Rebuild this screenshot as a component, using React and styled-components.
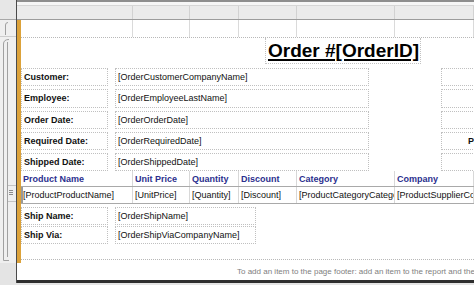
import styled, { createGlobalStyle } from 'styled-components'

const Global = createGlobalStyle`
  html, body { margin: 0; padding: 0; background: #e4e4e4; }
  body { font-family: "Liberation Sans", Arial, sans-serif; }
`

const Frame = styled.div`
  display: flex;
  width: 474px;
  height: 285px;
  overflow: hidden;
  background: #e4e4e4;
`

const Gutter = styled.div`
  width: 16px;
  flex-shrink: 0;
  background: #efefef;
`

const Page = styled.div`
  flex: 1;
  min-width: 0;
  display: flex;
  flex-direction: column;
  border-left: 1px solid #4a4a4a;
  height: 283px;
  overflow: hidden;
`

const TopRule = styled.div`
  height: 2px;
  background: #8e8e8e;
  flex-shrink: 0;
`

const TopGap = styled.div`
  height: 3px;
  background: #f6f6f6;
  flex-shrink: 0;
`

const ColumnHeader = styled.div`
  display: grid;
  grid-template-columns: 116px 57px 49px 58px 98px 1fr;
  height: 13px;
  background: #ebebeb;
  border-top: 1px solid #d6d6d6;
  border-bottom: 1px solid #9c9c9c;
  flex-shrink: 0;
`

const HeadCell = styled.div`
  border-right: 1px solid #d2d2d2;
`

const Body = styled.div`
  flex: 1;
  display: flex;
  flex-direction: column;
  background: #fff;
  border-bottom: 3px solid #2e2e2e;
`

const Detail = styled.div`
  display: flex;
  height: 243px;
  flex-shrink: 0;
`

const Strip = styled.div`
  width: 4px;
  flex-shrink: 0;
  background: #dca23a;
`

const Content = styled.div`
  flex: 1;
  min-width: 0;
  display: flex;
  flex-direction: column;
`

const BandRow = styled.div`
  display: grid;
  grid-template-columns: 112px 57px 49px 58px 98px 1fr;
  height: 17px;
  border-bottom: 1px dotted #b8b8b8;
  flex-shrink: 0;
`

const BandCell = styled.div`
  border-right: 1px solid #dadada;
`

const TitleRow = styled.div`
  display: flex;
  padding-left: 244px;
  height: 26px;
  flex-shrink: 0;
`

const TitleBox = styled.div`
  width: 156px;
  box-sizing: border-box;
  border: 1px dotted #c2c2c2;
  border-top: none;
  padding: 0 0 0 2px;
  font-weight: bold;
  font-size: 19px;
  line-height: 26px;
  color: #000;
  text-decoration: underline;
  text-decoration-thickness: 2px;
  text-underline-offset: 2px;
  white-space: nowrap;
`

const Fields = styled.div`
  display: flex;
  flex-direction: column;
  gap: 3px;
  margin-top: 4px;
  flex-shrink: 0;
`

const FieldRow = styled.div`
  display: flex;
  height: ${p => p.$h || 18.3}px;
  flex-shrink: 0;
`

const Box = styled.div`
  box-sizing: border-box;
  width: ${p => p.$w}px;
  margin-left: ${p => p.$ml || 0}px;
  flex-shrink: 0;
  border: 1px dotted #c0c0c0;
  padding-left: ${p => p.$pl || 2}px;
  display: flex;
  align-items: center;
  font-size: 9px;
  font-weight: ${p => (p.$bold ? 'bold' : 'normal')};
  color: #111;
  white-space: nowrap;
  overflow: hidden;
`

const Table = styled.div`
  display: flex;
  flex-direction: column;
  flex-shrink: 0;
`

const TableRow = styled.div`
  display: grid;
  grid-template-columns: 112px 57px 49px 58px 98px 1fr;
  height: ${p => p.$h}px;
  border-bottom: 1px solid #a9a9a9;
`

const TCell = styled.div`
  display: flex;
  align-items: center;
  padding-left: ${p => p.$pl ?? 2}px;
  border-right: 1px solid #d8d8d8;
  border-left: ${p => (p.$marker ? '2px solid #9a9a9a' : 'none')};
  font-size: 9px;
  font-weight: ${p => (p.$head ? 'bold' : 'normal')};
  color: ${p => (p.$head ? '#2b2f8e' : '#111')};
  white-space: nowrap;
  overflow: hidden;
`

const Ship = styled.div`
  display: flex;
  flex-direction: column;
  gap: 1.5px;
  margin-top: 3px;
  flex-shrink: 0;
`

const SectionEnd = styled.div`
  margin-top: auto;
  margin-bottom: 3px;
  border-bottom: 1px dotted #b8b8b8;
`

const Footer = styled.div`
  flex: 1;
  display: flex;
  align-items: center;
  padding-left: 220px;
  font-size: 8px;
  color: #808080;
  white-space: nowrap;
  overflow: hidden;
`

const GutterLines = () => (
  <svg width="16" height="285" viewBox="0 0 16 285">
    <rect x="0" y="0" width="16" height="19" fill="#e7e7e7" />
    <line x1="0" y1="19.5" x2="16" y2="19.5" stroke="#a8a8a8" />
    <line x1="0" y1="36.5" x2="16" y2="36.5" stroke="#cdcdcd" />
    <path d="M8 22.5 Q5.5 22.5 5.5 25 V35" fill="none" stroke="#a0a0a0" />
    <path d="M9 39.5 Q3.5 39.5 3.5 44 V260.5 H9" fill="none" stroke="#a0a0a0" />
    <path d="M7.5 42 V257" fill="none" stroke="#a0a0a0" />
    <line x1="8" y1="185.5" x2="16" y2="185.5" stroke="#c4c4c4" />
    <line x1="8" y1="201.5" x2="16" y2="201.5" stroke="#c4c4c4" />
    <g stroke="#8c8c8c">
      <line x1="9" y1="190.5" x2="13" y2="190.5" />
      <line x1="9" y1="192.5" x2="13" y2="192.5" />
      <line x1="9" y1="194.5" x2="13" y2="194.5" />
    </g>
    <rect x="0" y="263" width="16" height="22" fill="#e4e4e4" />
  </svg>
)

const fields = [
  ['Customer:', '[OrderCustomerCompanyName]', ''],
  ['Employee:', '[OrderEmployeeLastName]', ''],
  ['Order Date:', '[OrderOrderDate]', ''],
  ['Required Date:', '[OrderRequiredDate]', 'Phone:'],
  ['Shipped Date:', '[OrderShippedDate]', ''],
]

const heads = ['Product Name', 'Unit Price', 'Quantity', 'Discount', 'Category', 'Company']
const cells = [
  '[ProductProductName]',
  '[UnitPrice]',
  '[Quantity]',
  '[Discount]',
  '[ProductCategoryCategoryName]',
  '[ProductSupplierCompanyName]',
]

export default function App() {
  return (
    <>
      <Global />
      <Frame>
        <Gutter>
          <GutterLines />
        </Gutter>
        <Page>
          <TopRule />
          <TopGap />
          <ColumnHeader>
            {[0, 1, 2, 3, 4, 5].map(i => <HeadCell key={i} />)}
          </ColumnHeader>
          <Body>
            <Detail>
              <Strip />
              <Content>
                <BandRow>
                  {[0, 1, 2, 3, 4, 5].map(i => <BandCell key={i} />)}
                </BandRow>
                <TitleRow>
                  <TitleBox>Order #[OrderID]</TitleBox>
                </TitleRow>
                <Fields>
                  {fields.map(([label, value, extra]) => (
                    <FieldRow key={label}>
                      <Box $w={87} $bold>{label}</Box>
                      <Box $w={254} $ml={7}>{value}</Box>
                      <Box $w={60} $ml={72} $pl={26} $bold>{extra}</Box>
                    </FieldRow>
                  ))}
                </Fields>
                <Table>
                  <TableRow $h={14.5}>
                    {heads.map(h => <TCell key={h} $head>{h}</TCell>)}
                  </TableRow>
                  <TableRow $h={16}>
                    {cells.map((c, i) => (
                      <TCell key={c} $marker={i === 0} $pl={i === 0 ? 0 : 2}>{c}</TCell>
                    ))}
                  </TableRow>
                </Table>
                <Ship>
                  <FieldRow $h={18}>
                    <Box $w={87} $bold>Ship Name:</Box>
                    <Box $w={141} $ml={7}>[OrderShipName]</Box>
                  </FieldRow>
                  <FieldRow $h={18}>
                    <Box $w={87} $bold>Ship Via:</Box>
                    <Box $w={141} $ml={7}>[OrderShipViaCompanyName]</Box>
                  </FieldRow>
                </Ship>
                <SectionEnd />
              </Content>
            </Detail>
            <Footer>To add an item to the page footer: add an item to the report and then drag it to the page footer.</Footer>
          </Body>
        </Page>
      </Frame>
    </>
  )
}
